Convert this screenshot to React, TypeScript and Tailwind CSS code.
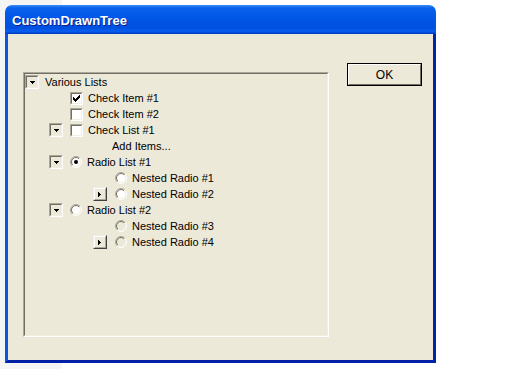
import React from 'react';

type Mark = 'box' | 'boxChecked' | 'radio' | 'radioOn' | 'radioOff' | null;

const CHECK = [
  '......x',
  '.....xx',
  'x...xxx',
  'xx.xxx.',
  'xxxxx..',
  '.xxx...',
  '..x....',
];

const Pixels = ({ rows, fill = '#000' }: { rows: string[]; fill?: string }) => (
  <svg width={rows[0].length} height={rows.length} shapeRendering="crispEdges">
    {rows.flatMap((r, y) =>
      r.split('').map((c, x) => (c === 'x' ? <rect key={`${x}-${y}`} x={x} y={y} width={1} height={1} fill={fill} /> : null))
    )}
  </svg>
);

const Expander = ({ dir }: { dir: 'down' | 'right' }) => {
  if (dir === 'down') {
    return (
      <span className="flex h-[14px] w-[14px] items-center justify-center border border-t-[#aca899] border-l-[#aca899] border-r-white border-b-white">
        <span className="flex h-full w-full items-center justify-center border border-t-[#716f64] border-l-[#716f64] border-r-[#f1efe2] border-b-[#f1efe2] pt-[1px]">
          <Pixels rows={['xxxxx', '.xxx.', '..x..']} />
        </span>
      </span>
    );
  }
  return (
    <span className="flex h-[14px] w-[14px] items-center justify-center border border-t-[#f1efe2] border-l-[#f1efe2] border-r-[#404040] border-b-[#404040]">
      <span className="flex h-full w-full items-center justify-center border border-t-white border-l-white border-r-[#aca899] border-b-[#aca899] pr-[1px]">
        <Pixels rows={['x..', 'xx.', 'xxx', 'xx.', 'x..']} />
      </span>
    </span>
  );
};

const CheckBox = ({ checked }: { checked: boolean }) => (
  <span className="flex h-[13px] w-[13px] border border-t-[#aca899] border-l-[#aca899] border-r-white border-b-white">
    <span className="flex h-full w-full items-center justify-center border border-t-[#716f64] border-l-[#716f64] border-r-[#f1efe2] border-b-[#f1efe2] bg-white">
      {checked && <Pixels rows={CHECK} />}
    </span>
  </span>
);

const Radio = ({ on, disabled }: { on: boolean; disabled: boolean }) => (
  <svg width={12} height={12} viewBox="0 0 12 12">
    <defs>
      <linearGradient id="rOuter" x1="0" y1="0" x2="1" y2="1">
        <stop offset="0.5" stopColor="#aca899" />
        <stop offset="0.5" stopColor="#ffffff" />
      </linearGradient>
      <linearGradient id="rInner" x1="0" y1="0" x2="1" y2="1">
        <stop offset="0.5" stopColor="#716f64" />
        <stop offset="0.5" stopColor="#f1efe2" />
      </linearGradient>
    </defs>
    <circle cx={6} cy={6} r={4.5} fill={disabled ? '#ece9d8' : '#ffffff'} />
    <circle cx={6} cy={6} r={5.5} fill="none" stroke="url(#rOuter)" strokeWidth={1} />
    <circle cx={6} cy={6} r={4.5} fill="none" stroke="url(#rInner)" strokeWidth={1} />
    {on && <circle cx={6} cy={6} r={2} fill="#000" />}
  </svg>
);

const Row = ({
  indent,
  exp,
  mark,
  text,
  textGap = 'ml-[5px]',
}: {
  indent: string;
  exp: 'down' | 'right' | null;
  mark: Mark;
  text: string;
  textGap?: string;
}) => (
  <div className={`flex h-4 items-center ${indent}`}>
    <span className="flex w-[14px] shrink-0">{exp && <Expander dir={exp} />}</span>
    {(mark === 'box' || mark === 'boxChecked') && (
      <span className="ml-[7px] flex">
        <CheckBox checked={mark === 'boxChecked'} />
      </span>
    )}
    {(mark === 'radio' || mark === 'radioOn' || mark === 'radioOff') && (
      <span className={`flex ${indent === 'pl-[24px]' ? 'ml-[7px]' : 'ml-[8px]'}`}>
        <Radio on={mark === 'radioOn'} disabled={mark === 'radioOff'} />
      </span>
    )}
    <span className={`${textGap} whitespace-nowrap leading-none`}>{text}</span>
  </div>
);

export default function App() {
  return (
    <div className="relative h-[384px] w-[512px] overflow-hidden bg-white font-['Liberation_Sans',Arial,sans-serif]">
      {/* window behind, peeking out */}
      <div className="absolute left-0 top-0 h-[369px] w-[62px] bg-[#f5f5f5]" />

      <div className="relative ml-[5px] mt-[5px] flex h-[358px] w-[431px] flex-col overflow-hidden rounded-t-[7px]">
        <div className="flex h-[29px] shrink-0 items-center bg-[linear-gradient(180deg,#3d8ef8_0%,#0a62ec_10%,#0056e6_45%,#0050e0_80%,#0a5ff0_90%,#0038c0_100%)] pl-[7px] pt-[2px]">
          <span className="text-[13px] font-bold leading-none text-white [text-shadow:1px_1px_0_#0a1e8a]">
            CustomDrawnTree
          </span>
        </div>

        <div className="flex flex-1 border-b-[3px] border-l-[3px] border-r-[3px] border-b-[#0020a8] border-l-[#0a56e0] border-r-[#0026b0] bg-[#ece9d8]">
          <div className="flex flex-1 items-start pl-[15px] pt-[29px]">
            <div className="mt-[9px] h-[265px] w-[306px] border border-t-[#aca899] border-l-[#aca899] border-r-white border-b-white">
              <div className="h-full w-full border border-t-[#716f64] border-l-[#716f64] border-r-[#f1efe2] border-b-[#f1efe2] text-[11px] text-black">
                <Row indent="pl-0" exp="down" mark={null} text="Various Lists" textGap="ml-[6px]" />
                <Row indent="pl-[24px]" exp={null} mark="boxChecked" text="Check Item #1" />
                <Row indent="pl-[24px]" exp={null} mark="box" text="Check Item #2" />
                <Row indent="pl-[24px]" exp="down" mark="box" text="Check List #1" />
                <Row indent="pl-[68px]" exp={null} mark={null} text="Add Items..." />
                <Row indent="pl-[24px]" exp="down" mark="radioOn" text="Radio List #1" />
                <Row indent="pl-[68px]" exp={null} mark="radio" text="Nested Radio #1" />
                <Row indent="pl-[68px]" exp="right" mark="radio" text="Nested Radio #2" />
                <Row indent="pl-[24px]" exp="down" mark="radio" text="Radio List #2" />
                <Row indent="pl-[68px]" exp={null} mark="radioOff" text="Nested Radio #3" />
                <Row indent="pl-[68px]" exp="right" mark="radioOff" text="Nested Radio #4" />
              </div>
            </div>

            <button className="ml-[18px] flex h-[23px] w-[75px] items-center justify-center border border-black bg-[#ece9d8] p-0">
              <span className="flex h-full w-full items-center justify-center border border-t-white border-l-white border-r-[#716f64] border-b-[#716f64] text-[12px] leading-none text-black">
                OK
              </span>
            </button>
          </div>
        </div>
      </div>
    </div>
  );
}
